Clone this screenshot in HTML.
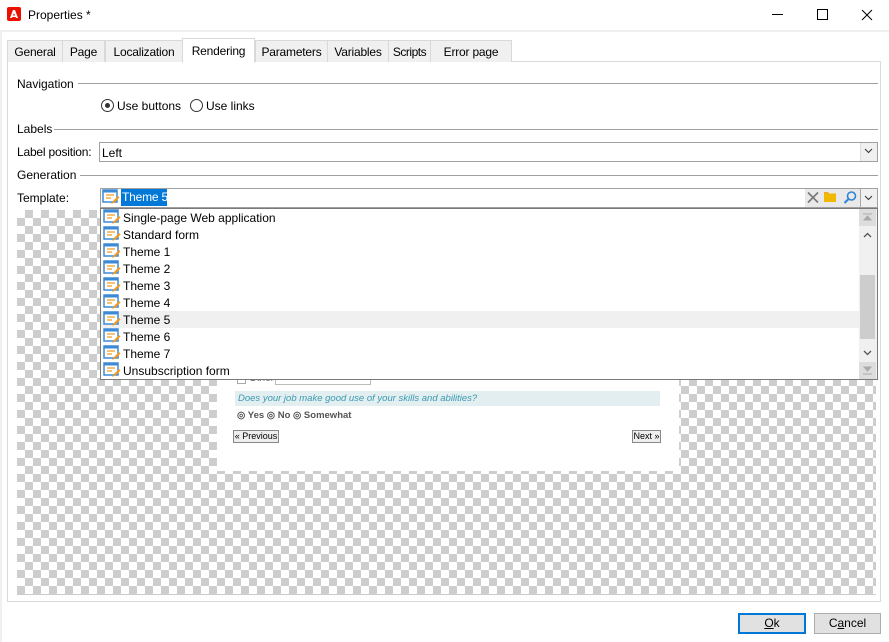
<!DOCTYPE html>
<html><head><meta charset="utf-8"><style>
*{box-sizing:border-box;margin:0;padding:0}
body{width:889px;height:642px;background:#fff;font-family:"Liberation Sans",Arial,sans-serif;font-size:12px;color:#000;position:relative;overflow:hidden;white-space:nowrap}
.a{position:absolute}
.tab{position:absolute;top:40px;height:22px;border:1px solid #d9d9d9;border-bottom:none;background:#f0f0f0;padding-top:4px;text-align:center;font-size:12px;letter-spacing:-0.2px}
.sec{position:absolute;left:17px;font-size:12px}
.line{position:absolute;height:1px;background:#a0a0a0;right:10px}
.chk{position:absolute;left:17px;top:210px;width:859px;height:385px;background-color:#fff;background-image:conic-gradient(#cdcdcd 25%,#fff 0 50%,#cdcdcd 0 75%,#fff 0);background-size:16px 16px;background-position:0 0}
.row{position:absolute;left:101px;height:17px;width:758px;font-size:12px;padding-left:22px;line-height:18px}
.row svg{position:absolute;left:2px;top:0}
.btn{position:absolute;top:613px;height:21px;background:#e1e1e1;border:1px solid #adadad;text-align:center;line-height:19px;font-size:12px}
</style></head><body>
<div class="a" style="left:0;top:0;width:889px;height:30px;background:#fff"></div>
<div class="a" style="left:7px;top:7px;width:14px;height:14px;background:#eb1000;border-radius:2px"></div>
<svg class="a" style="left:9px;top:9px" width="10" height="10" viewBox="0 0 10 10"><path d="M1 9L4 1H6L9 9H7L5 4 4 6.5H6L6.6 8H3.4L3 9Z" fill="#fff"/></svg>
<div class="a" style="left:28px;top:8px;font-size:12px">Properties *</div>
<div class="a" style="left:772px;top:14px;width:11px;height:1px;background:#000"></div>
<div class="a" style="left:817px;top:9px;width:11px;height:11px;border:1px solid #000"></div>
<svg class="a" style="left:861px;top:9px" width="12" height="12"><path d="M1 1L11 11M11 1L1 11" stroke="#000" stroke-width="1"/></svg>
<div class="a" style="left:0;top:30px;width:889px;height:2px;background:#f0f0f0"></div>
<div class="a" style="left:0;top:30px;width:2px;height:612px;background:#f0f0f0"></div>

<div class="a" style="left:7px;top:61px;width:874px;height:541px;border:1px solid #d9d9d9;background:#fff"></div>
<div class="tab" style="left:7px;width:56px">General</div>
<div class="tab" style="left:62px;width:43px">Page</div>
<div class="tab" style="left:105px;width:78px">Localization</div>
<div class="tab" style="left:182px;width:73px;top:38px;height:25px;background:#fff;border-bottom:1px solid #fff;padding-top:5px">Rendering</div>
<div class="tab" style="left:255px;width:73px">Parameters</div>
<div class="tab" style="left:327px;width:62px">Variables</div>
<div class="tab" style="left:388px;width:43px;letter-spacing:-0.5px">Scripts</div>
<div class="tab" style="left:430px;width:82px">Error page</div>

<div class="sec" style="top:77px">Navigation</div><div class="line" style="left:78px;top:83px;right:11px"></div>
<div class="a" style="left:101px;top:99px;width:13px;height:13px;border:1px solid #333;border-radius:50%"></div>
<div class="a" style="left:105px;top:103px;width:5px;height:5px;background:#333;border-radius:50%"></div>
<div class="a" style="left:117px;top:99px">Use buttons</div>
<div class="a" style="left:190px;top:99px;width:13px;height:13px;border:1px solid #333;border-radius:50%"></div>
<div class="a" style="left:206px;top:99px">Use links</div>

<div class="sec" style="top:122px">Labels</div><div class="line" style="left:54px;top:129px;right:11px"></div>
<div class="sec" style="top:145px;letter-spacing:-0.2px">Label position:</div>
<div class="a" style="left:99px;top:142px;width:779px;height:20px;border:1px solid #a0a0a0;background:#fff;padding:3px 0 0 2px">Left</div>
<div class="a" style="left:860px;top:143px;width:17px;height:18px;background:#f0f0f0;border-left:1px solid #ddd"></div>
<svg class="a" style="left:864px;top:148px" width="9" height="6"><path d="M1 1L4.5 4.5 8 1" stroke="#333" fill="none"/></svg>

<div class="sec" style="top:168px">Generation</div><div class="line" style="left:80px;top:175px;right:11px"></div>
<div class="sec" style="top:191px">Template:</div>

<div class="chk"></div>
<div class="a" style="left:217px;top:360px;width:462px;height:111px;background:#fff"></div>
<div class="a" style="left:237px;top:375px;width:9px;height:9px;border:1px solid #aaa"></div>
<div class="a" style="left:249px;top:373px;font-size:10px;color:#666">Other</div>
<div class="a" style="left:275px;top:372px;width:96px;height:13px;border:1px solid #bbb"></div>
<div class="a" style="left:235px;top:391px;width:425px;height:15px;background:#e2eef0"></div>
<div class="a" style="left:238px;top:393px;font-size:9.5px;font-style:italic;color:#3a9ab0">Does your job make good use of your skills and abilities?</div>
<div class="a" style="left:237px;top:410px;font-size:9.5px;color:#555;font-weight:bold">◎ Yes ◎ No ◎ Somewhat</div>
<div class="a" style="left:233px;top:430px;width:46px;height:13px;border:1px solid #888;background:#eee;font-size:9px;line-height:11px;text-align:center">« Previous</div>
<div class="a" style="left:632px;top:430px;width:29px;height:13px;border:1px solid #888;background:#eee;font-size:9px;line-height:11px;text-align:center">Next »</div>

<div class="a" style="left:100px;top:188px;width:778px;height:20px;border:1px solid #a0a0a0;background:#fff"></div>
<svg class="a" style="left:102px;top:189px" width="18" height="17" viewBox="0 0 18 17"><rect x="1" y="1" width="14" height="12" fill="#fff" stroke="#3c8ad6" stroke-width="1.5"/><rect x="1" y="1" width="14" height="2.5" fill="#3c8ad6"/><path d="M4 6H12M4 9H9" stroke="#f39a1e" stroke-width="1.3"/><path d="M9 15L11 12 16 7 17.5 8.5 12.5 13.5Z" fill="#f39a1e"/></svg>
<div class="a" style="left:121px;top:189px;width:46px;height:17px;background:#0078d7;color:#fff;line-height:17px;padding-left:1px;overflow:hidden;letter-spacing:-0.2px">Theme 5</div>
<div class="a" style="left:805px;top:189px;width:55px;height:18px;background:#e9e9e9"></div>
<svg class="a" style="left:807px;top:191px" width="12" height="13"><path d="M1 1.5L11 11.5M11 1.5L1 11.5" stroke="#777" stroke-width="1.6"/></svg>
<svg class="a" style="left:823px;top:191px" width="14" height="12"><path d="M1 1H5L6 2.5H13V11H1Z" fill="#f0b800"/><path d="M1 1H5L6 2.5H1Z" fill="#f5a623"/></svg>
<svg class="a" style="left:843px;top:190px" width="14" height="15"><circle cx="8.5" cy="6" r="4" stroke="#2d84d6" stroke-width="1.6" fill="none"/><path d="M5.5 9L1.5 13" stroke="#2d84d6" stroke-width="2"/></svg>
<div class="a" style="left:860px;top:189px;width:17px;height:18px;background:#f0f0f0;border-left:1px solid #aaa"></div>
<svg class="a" style="left:864px;top:195px" width="9" height="6"><path d="M1 1L4.5 4.5 8 1" stroke="#333" fill="none"/></svg>

<div class="a" style="left:100px;top:208px;width:778px;height:172px;border:1px solid #7a7a7a;background:#fff"></div>
<div class="a" style="left:101px;top:311px;width:758px;height:17px;background:#f0f0f0"></div>
<div class="a" style="left:859px;top:209px;width:18px;height:170px;background:#f0f0f0"></div>
<div class="a" style="left:859px;top:209px;width:17px;height:17px;background:#ddd"></div>
<div class="a" style="left:859px;top:362px;width:17px;height:17px;background:#ddd"></div>
<div class="a" style="left:860px;top:275px;width:15px;height:64px;background:#cdcdcd"></div>
<svg class="a" style="left:862px;top:213px" width="11" height="9"><path d="M1 1H10M5.5 3L9 7H2Z" stroke="#aaa" fill="#aaa"/></svg>
<svg class="a" style="left:863px;top:232px" width="9" height="6"><path d="M1 5L4.5 1.5 8 5" stroke="#555" stroke-width="1.3" fill="none"/></svg>
<svg class="a" style="left:863px;top:350px" width="9" height="6"><path d="M1 1L4.5 4.5 8 1" stroke="#555" stroke-width="1.3" fill="none"/></svg>
<svg class="a" style="left:862px;top:366px" width="11" height="9"><path d="M2 1H9L5.5 5ZM1 8H10" stroke="#aaa" fill="#aaa"/></svg>

<div class="row" style="top:209px"><svg width="18" height="17" viewBox="0 0 18 17"><rect x="1" y="1" width="14" height="12" fill="#fff" stroke="#3c8ad6" stroke-width="1.5"/><rect x="1" y="1" width="14" height="2.5" fill="#3c8ad6"/><path d="M4 6H12M4 9H9" stroke="#f39a1e" stroke-width="1.3"/><path d="M9 15L11 12 16 7 17.5 8.5 12.5 13.5Z" fill="#f39a1e"/></svg>Single-page Web application</div>
<div class="row" style="top:226px"><svg width="18" height="17" viewBox="0 0 18 17"><rect x="1" y="1" width="14" height="12" fill="#fff" stroke="#3c8ad6" stroke-width="1.5"/><rect x="1" y="1" width="14" height="2.5" fill="#3c8ad6"/><path d="M4 6H12M4 9H9" stroke="#f39a1e" stroke-width="1.3"/><path d="M9 15L11 12 16 7 17.5 8.5 12.5 13.5Z" fill="#f39a1e"/></svg>Standard form</div>
<div class="row" style="top:243px"><svg width="18" height="17" viewBox="0 0 18 17"><rect x="1" y="1" width="14" height="12" fill="#fff" stroke="#3c8ad6" stroke-width="1.5"/><rect x="1" y="1" width="14" height="2.5" fill="#3c8ad6"/><path d="M4 6H12M4 9H9" stroke="#f39a1e" stroke-width="1.3"/><path d="M9 15L11 12 16 7 17.5 8.5 12.5 13.5Z" fill="#f39a1e"/></svg>Theme 1</div>
<div class="row" style="top:260px"><svg width="18" height="17" viewBox="0 0 18 17"><rect x="1" y="1" width="14" height="12" fill="#fff" stroke="#3c8ad6" stroke-width="1.5"/><rect x="1" y="1" width="14" height="2.5" fill="#3c8ad6"/><path d="M4 6H12M4 9H9" stroke="#f39a1e" stroke-width="1.3"/><path d="M9 15L11 12 16 7 17.5 8.5 12.5 13.5Z" fill="#f39a1e"/></svg>Theme 2</div>
<div class="row" style="top:277px"><svg width="18" height="17" viewBox="0 0 18 17"><rect x="1" y="1" width="14" height="12" fill="#fff" stroke="#3c8ad6" stroke-width="1.5"/><rect x="1" y="1" width="14" height="2.5" fill="#3c8ad6"/><path d="M4 6H12M4 9H9" stroke="#f39a1e" stroke-width="1.3"/><path d="M9 15L11 12 16 7 17.5 8.5 12.5 13.5Z" fill="#f39a1e"/></svg>Theme 3</div>
<div class="row" style="top:294px"><svg width="18" height="17" viewBox="0 0 18 17"><rect x="1" y="1" width="14" height="12" fill="#fff" stroke="#3c8ad6" stroke-width="1.5"/><rect x="1" y="1" width="14" height="2.5" fill="#3c8ad6"/><path d="M4 6H12M4 9H9" stroke="#f39a1e" stroke-width="1.3"/><path d="M9 15L11 12 16 7 17.5 8.5 12.5 13.5Z" fill="#f39a1e"/></svg>Theme 4</div>
<div class="row" style="top:311px"><svg width="18" height="17" viewBox="0 0 18 17"><rect x="1" y="1" width="14" height="12" fill="#fff" stroke="#3c8ad6" stroke-width="1.5"/><rect x="1" y="1" width="14" height="2.5" fill="#3c8ad6"/><path d="M4 6H12M4 9H9" stroke="#f39a1e" stroke-width="1.3"/><path d="M9 15L11 12 16 7 17.5 8.5 12.5 13.5Z" fill="#f39a1e"/></svg>Theme 5</div>
<div class="row" style="top:328px"><svg width="18" height="17" viewBox="0 0 18 17"><rect x="1" y="1" width="14" height="12" fill="#fff" stroke="#3c8ad6" stroke-width="1.5"/><rect x="1" y="1" width="14" height="2.5" fill="#3c8ad6"/><path d="M4 6H12M4 9H9" stroke="#f39a1e" stroke-width="1.3"/><path d="M9 15L11 12 16 7 17.5 8.5 12.5 13.5Z" fill="#f39a1e"/></svg>Theme 6</div>
<div class="row" style="top:345px"><svg width="18" height="17" viewBox="0 0 18 17"><rect x="1" y="1" width="14" height="12" fill="#fff" stroke="#3c8ad6" stroke-width="1.5"/><rect x="1" y="1" width="14" height="2.5" fill="#3c8ad6"/><path d="M4 6H12M4 9H9" stroke="#f39a1e" stroke-width="1.3"/><path d="M9 15L11 12 16 7 17.5 8.5 12.5 13.5Z" fill="#f39a1e"/></svg>Theme 7</div>
<div class="row" style="top:362px"><svg width="18" height="17" viewBox="0 0 18 17"><rect x="1" y="1" width="14" height="12" fill="#fff" stroke="#3c8ad6" stroke-width="1.5"/><rect x="1" y="1" width="14" height="2.5" fill="#3c8ad6"/><path d="M4 6H12M4 9H9" stroke="#f39a1e" stroke-width="1.3"/><path d="M9 15L11 12 16 7 17.5 8.5 12.5 13.5Z" fill="#f39a1e"/></svg>Unsubscription form</div>

<div class="a" style="left:17px;top:594px;width:859px;height:1px;background:#ccc"></div>
<div class="btn" style="left:738px;width:68px;border:2px solid #0078d7;line-height:17px"><u>O</u>k</div>
<div class="btn" style="left:814px;width:67px">C<u>a</u>ncel</div>
</body></html>
